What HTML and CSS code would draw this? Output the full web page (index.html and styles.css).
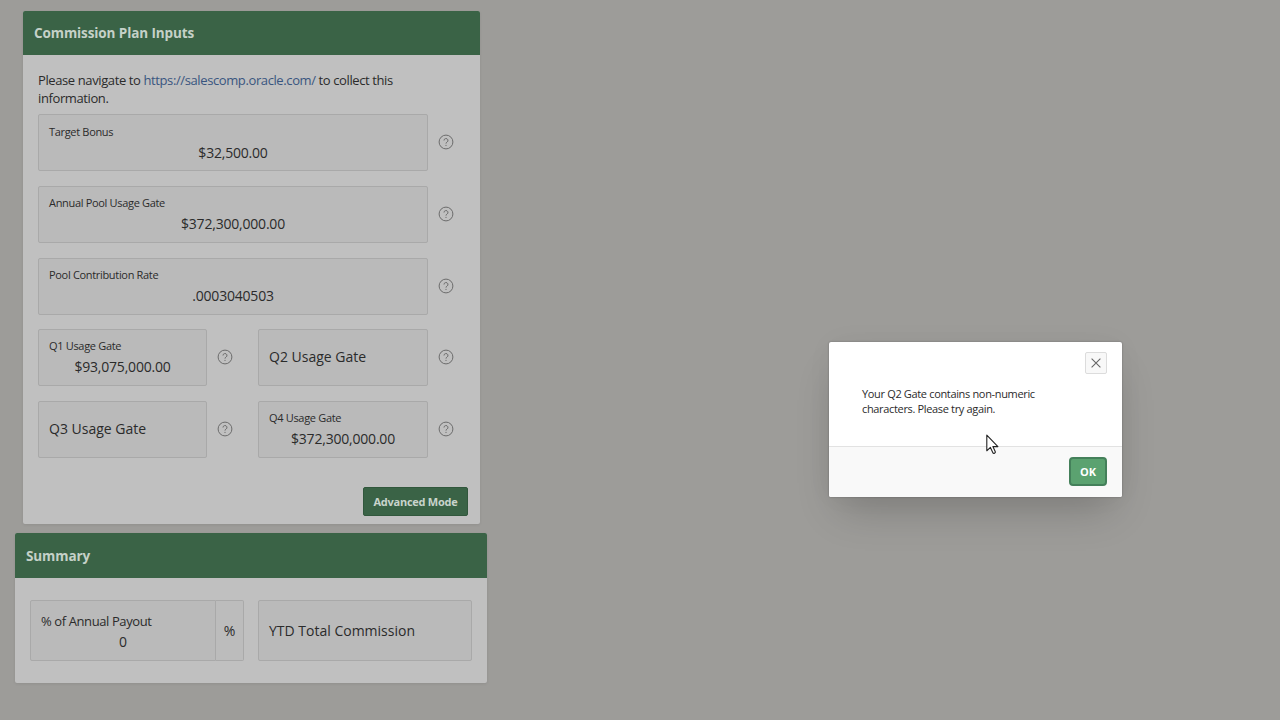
FILE: index.html
```html
<!DOCTYPE html>
<html lang="en">
<head>
  <meta charset="UTF-8">
  <meta name="viewport" content="width=device-width, initial-scale=1.0">
  <title>Commission Calculator</title>
  <link rel="stylesheet" href="styles.css">
</head>
<body>
  <svg class="icon-defs" width="0" height="0">
    <symbol id="icon-help" viewBox="0 0 16 16">
      <circle cx="8" cy="8" r="6.9" fill="none" stroke="currentColor" stroke-width="1"/>
      <path d="M6 6.5a2 1.9 0 1 1 3 1.6c-.7.4-1 .8-1 1.5" fill="none" stroke="currentColor" stroke-width="1"/>
      <circle cx="8" cy="11.3" r=".65" fill="currentColor"/>
    </symbol>
  </svg>

  <main class="page">
    <section class="region region-inputs">
      <h2 class="region-header">Commission Plan Inputs</h2>
      <div class="region-body">
        <p class="intro">Please navigate to <a href="#">https://salescomp.oracle.com/</a> to collect this<br>information.</p>

        <div class="field-grid">
          <div class="field wide first">
            <label>Target Bonus</label>
            <div class="value">$32,500.00</div>
          </div>
          <svg class="help"><use href="#icon-help"/></svg>

          <div class="field wide">
            <label>Annual Pool Usage Gate</label>
            <div class="value">$372,300,000.00</div>
          </div>
          <svg class="help"><use href="#icon-help"/></svg>

          <div class="field wide">
            <label>Pool Contribution Rate</label>
            <div class="value">.0003040503</div>
          </div>
          <svg class="help"><use href="#icon-help"/></svg>

          <div class="field">
            <label>Q1 Usage Gate</label>
            <div class="value">$93,075,000.00</div>
          </div>
          <svg class="help"><use href="#icon-help"/></svg>
          <div class="field empty">
            <label>Q2 Usage Gate</label>
          </div>
          <svg class="help"><use href="#icon-help"/></svg>

          <div class="field empty">
            <label>Q3 Usage Gate</label>
          </div>
          <svg class="help"><use href="#icon-help"/></svg>
          <div class="field">
            <label>Q4 Usage Gate</label>
            <div class="value">$372,300,000.00</div>
          </div>
          <svg class="help"><use href="#icon-help"/></svg>
        </div>

        <button class="btn-advanced">Advanced Mode</button>
      </div>
    </section>

    <section class="region region-summary">
      <h2 class="region-header">Summary</h2>
      <div class="summary-body">
        <div class="payout">
          <div class="field">
            <label>% of Annual Payout</label>
            <div class="value">0</div>
          </div>
          <span class="suffix">%</span>
        </div>
        <div class="field empty total">
          <label>YTD Total Commission</label>
        </div>
      </div>
    </section>
  </main>

  <div class="dialog" role="alertdialog">
    <div class="dialog-body">
      <button class="btn-close" aria-label="Close">
        <svg width="10" height="10" viewBox="0 0 10 10"><path d="M.6.6l8.8 8.8M9.4.6L.6 9.4" stroke="#666" stroke-width="1.1"/></svg>
      </button>
      <p class="message">Your Q2 Gate contains non-numeric<br>characters. Please try again.</p>
    </div>
    <div class="dialog-footer">
      <button class="btn-ok">OK</button>
    </div>
  </div>

  <svg class="cursor" width="13" height="21" viewBox="0 0 13 21">
    <path d="M.8 1.2v15.6l3.6-3.4 2.6 5.5c.5 1 2.8.1 2.3-1.1l-2.4-5.2h5z" fill="#fff" stroke="#222" stroke-width="1.1" stroke-linejoin="round"/>
  </svg>
</body>
</html>
```

FILE: styles.css
```css
* {
  box-sizing: border-box;
}

body {
  margin: 0;
  height: 720px;
  overflow: hidden;
  background-color: #9d9c99;
  color: #2b2b2b;
  font-family: "Open Sans", "Noto Sans", sans-serif;
  font-size: 12px;
}

h2,
p {
  margin: 0;
}

button {
  font-family: inherit;
  cursor: pointer;
}

.icon-defs {
  position: absolute;
}

.page {
  width: 488px;
  padding: 11px 0 0 15px;
}

/* Regions */
.region {
  background-color: #c0c0c0;
  border-radius: 2px;
  box-shadow: 0 1px 3px rgba(0, 0, 0, 0.08);
}

.region-inputs {
  width: 457px;
  height: 513px;
  margin-left: 8px;
}

.region-summary {
  width: 472px;
  height: 150px;
  margin-top: 9px;
}

.region-header {
  height: 44px;
  padding-left: 11px;
  border-radius: 2px 2px 0 0;
  background-color: #3a6346;
  color: #c5d1c8;
  font-size: 13.5px;
  font-weight: 700;
  line-height: 45px;
  letter-spacing: -0.1px;
}

.region-summary .region-header {
  height: 45px;
  line-height: 46px;
}

.region-body {
  padding: 16px 12px 0 15px;
}

.intro {
  height: 43px;
  font-size: 13px;
  line-height: 18px;
  letter-spacing: -0.39px;
  white-space: nowrap;
}

.intro a {
  color: #39557f;
  text-decoration: none;
}

/* Fields */
.field-grid {
  display: grid;
  grid-template-columns: 169px 51px 170px 37px;
  grid-auto-rows: 57px;
  row-gap: 14.75px;
}

.field {
  padding: 9px 10px 0;
  border: 1px solid #a9a9a9;
  border-radius: 2px;
  background-color: #bababa;
  white-space: nowrap;
}

.field.wide {
  grid-column: span 3;
}

.field.first {
  padding-top: 10px;
}

.field label {
  display: block;
  font-size: 11px;
  line-height: 14px;
  letter-spacing: -0.32px;
}

.value {
  margin-top: 4px;
  font-size: 14px;
  line-height: 20px;
  letter-spacing: -0.2px;
  text-align: center;
}

.field.empty {
  display: flex;
  align-items: center;
  padding-top: 0;
  padding-bottom: 2px;
}

.field.empty label {
  font-size: 14px;
  line-height: 20px;
  letter-spacing: 0;
}

.help {
  width: 16px;
  height: 16px;
  margin: 0 0 1px 10px;
  align-self: center;
  color: #6c6c6c;
}

.btn-advanced {
  display: block;
  width: 105px;
  height: 29px;
  margin: 29px 0 0 auto;
  padding: 0;
  border: 1px solid #31573c;
  border-radius: 2px;
  background-color: #3a6346;
  color: #c9d4cc;
  font-size: 11px;
  font-weight: 700;
  letter-spacing: -0.25px;
}

/* Summary */
.summary-body {
  display: flex;
  gap: 14px;
  padding: 22px 15px 0;
}

.summary-body .field {
  height: 61px;
}

.payout {
  display: flex;
  width: 214px;
}

.payout .field {
  flex: 1;
  border-radius: 2px 0 0 2px;
}

.payout .field label {
  font-size: 13px;
  line-height: 22px;
  letter-spacing: -0.4px;
}

.payout .value {
  margin-top: 0;
}

.suffix {
  width: 28px;
  border: 1px solid #a9a9a9;
  border-left: 0;
  border-radius: 0 2px 2px 0;
  background-color: #bcbcbc;
  font-size: 14px;
  line-height: 59px;
  text-align: center;
}

.total {
  flex: 1;
}

.summary-body .total {
  padding-bottom: 0;
}

/* Alert dialog */
.dialog {
  position: absolute;
  top: 342px;
  left: 829px;
  width: 293px;
  height: 155px;
  border-radius: 2px;
  background-color: #fff;
  box-shadow: 0 22px 40px -10px rgba(0, 0, 0, 0.2), 0 0 30px rgba(0, 0, 0, 0.03), 0 0 2px rgba(0, 0, 0, 0.3);
}

.dialog-body {
  height: 104px;
  padding: 10px 15px 0 33px;
}

.btn-close {
  display: flex;
  align-items: center;
  justify-content: center;
  width: 22px;
  height: 22px;
  margin-left: auto;
  padding: 0;
  border: 1px solid #dcdcdc;
  border-radius: 2px;
  background-color: #f8f8f8;
}

.message {
  margin-top: 12px;
  font-size: 11px;
  line-height: 15px;
  letter-spacing: -0.34px;
  white-space: nowrap;
}

.dialog-footer {
  display: flex;
  justify-content: flex-end;
  height: 51px;
  padding: 10px 15px 0;
  border-top: 1px solid #e2e2e2;
  border-radius: 0 0 2px 2px;
  background-color: #f9f9f9;
}

.btn-ok {
  width: 38px;
  height: 29px;
  padding: 0;
  border: 2px solid #44805a;
  border-radius: 4px;
  background-color: #5ba270;
  color: #fff;
  font-size: 11px;
  font-weight: 700;
}

.cursor {
  position: absolute;
  top: 434px;
  left: 986px;
}
```
